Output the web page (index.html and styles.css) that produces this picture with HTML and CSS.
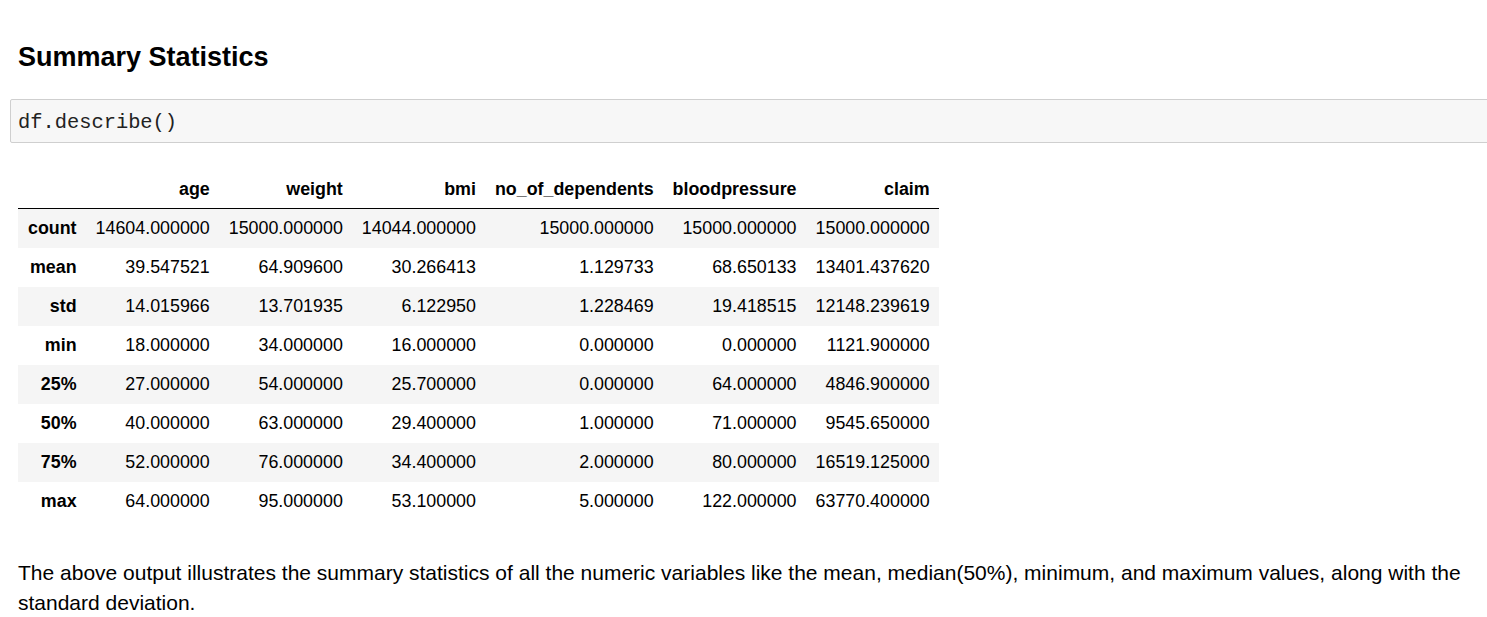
FILE: index.html
```html
<!DOCTYPE html>
<html>
<head>
<meta charset="utf-8">
<link rel="stylesheet" href="styles.css">
</head>
<body>
<div class="page">
  <h2 class="title">Summary Statistics</h2>
  <div class="code"><pre>df.describe()</pre></div>
  <table class="df">
    <thead>
      <tr><th></th><th>age</th><th>weight</th><th>bmi</th><th>no_of_dependents</th><th>bloodpressure</th><th>claim</th></tr>
    </thead>
    <tbody>
      <tr><th>count</th><td>14604.000000</td><td>15000.000000</td><td>14044.000000</td><td>15000.000000</td><td>15000.000000</td><td>15000.000000</td></tr>
      <tr><th>mean</th><td>39.547521</td><td>64.909600</td><td>30.266413</td><td>1.129733</td><td>68.650133</td><td>13401.437620</td></tr>
      <tr><th>std</th><td>14.015966</td><td>13.701935</td><td>6.122950</td><td>1.228469</td><td>19.418515</td><td>12148.239619</td></tr>
      <tr><th>min</th><td>18.000000</td><td>34.000000</td><td>16.000000</td><td>0.000000</td><td>0.000000</td><td>1121.900000</td></tr>
      <tr><th>25%</th><td>27.000000</td><td>54.000000</td><td>25.700000</td><td>0.000000</td><td>64.000000</td><td>4846.900000</td></tr>
      <tr><th>50%</th><td>40.000000</td><td>63.000000</td><td>29.400000</td><td>1.000000</td><td>71.000000</td><td>9545.650000</td></tr>
      <tr><th>75%</th><td>52.000000</td><td>76.000000</td><td>34.400000</td><td>2.000000</td><td>80.000000</td><td>16519.125000</td></tr>
      <tr><th>max</th><td>64.000000</td><td>95.000000</td><td>53.100000</td><td>5.000000</td><td>122.000000</td><td>63770.400000</td></tr>
    </tbody>
  </table>
  <p class="text">The above output illustrates the summary statistics of all the numeric variables like the mean, median(50%), minimum, and maximum values, along with the standard deviation.</p>
</div>
</body>
</html>
```
FILE: styles.css
```css
html, body {
  margin: 0;
  padding: 0;
  background: #ffffff;
  overflow: hidden;
}
.page {
  font-family: "Liberation Sans", Arial, sans-serif;
  color: #000;
  padding: 0 0 0 18px;
}
.title {
  font-size: 27px;
  font-weight: bold;
  margin: 0;
  padding-top: 42px;
  line-height: 30px;
}
.code {
  margin: 27px -20px 0 -8px;
  border: 1px solid #cfcfcf;
  border-radius: 2px;
  background: #f7f7f7;
  height: 42px;
  display: flex;
  align-items: center;
  padding-left: 7px;
}
.code pre {
  margin: 0;
  padding-top: 4px;
  font-family: "Liberation Mono", "Courier New", monospace;
  font-size: 20.4px;
  color: #222;
  line-height: 24px;
}
.df {
  border-collapse: collapse;
  border-spacing: 0;
  margin-top: 27px;
  font-size: 17.85px;
}
.df th, .df td {
  text-align: right;
  padding: 0 9px 0 10px;
  height: 39px;
  line-height: 21px;
  vertical-align: middle;
  white-space: nowrap;
}
.df th {
  font-weight: bold;
}
.df thead th {
  border-bottom: 1px solid #000;
  height: 38px;
}
.df tbody tr:nth-child(odd) {
  background: #f5f5f5;
}
.text {
  font-size: 21px;
  line-height: 30px;
  margin: 37px 0 0 0;
  padding-right: 20px;
}
```
